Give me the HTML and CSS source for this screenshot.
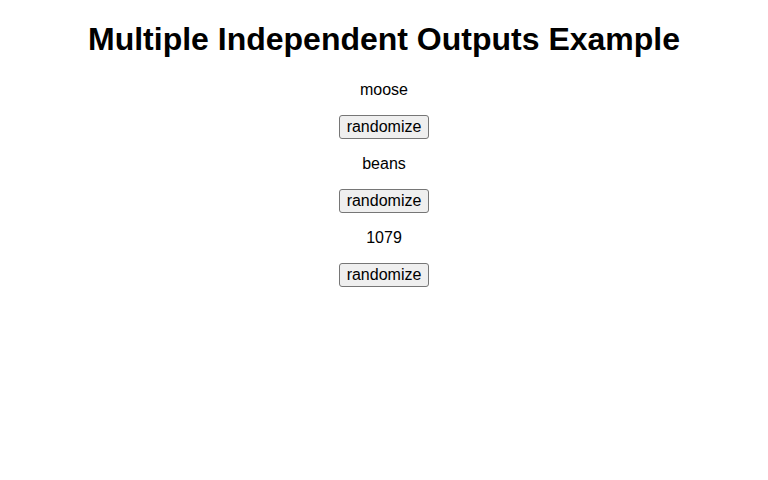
FILE: index.html
```html
<!DOCTYPE html>
<html>
	<head>
		<title>Multiple Independent Outputs Example</title>
		<link rel="stylesheet" href="styles.css">
	</head>
	<body>
	<h1>Multiple Independent Outputs Example</h1>
	<div class="output">
		<p>moose</p>
		<p><button class="randomize">randomize</button></p>
	</div>
	<div class="output">
		<p>beans</p>
		<p><button class="randomize">randomize</button></p>
	</div>
	<div class="output">
		<p>1079</p>
		<p><button class="randomize">randomize</button></p>
	</div>
	</body>
</html>
```
FILE: styles.css
```css
body {
	margin: 0;
	font-family: "Liberation Sans", Arial, sans-serif;
	text-align: center;
}
h1 {
	margin: 21px 0 23px;
}
button.randomize {
	font-family: "Liberation Sans", Arial, sans-serif;
	font-size: 16px;
	line-height: 18px;
	padding: 2px 7px;
	background-color: #efefef;
	border: 1px solid #767676;
	border-radius: 3px;
	color: #000;
}
```
